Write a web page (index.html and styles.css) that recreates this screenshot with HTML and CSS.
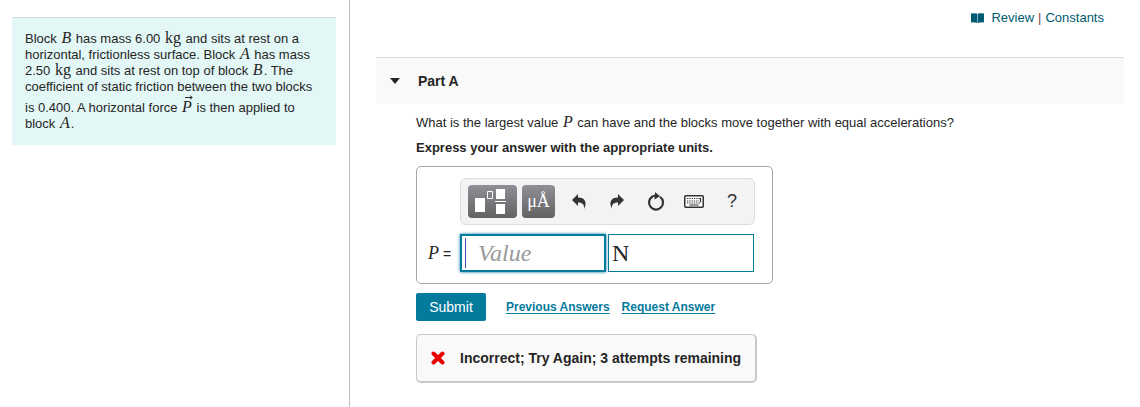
FILE: index.html
```
<!DOCTYPE html>
<html lang="en">
<head>
  <meta charset="UTF-8">
  <title>Part A - Friction Between Blocks</title>
  <meta name="viewport" content="width=device-width, initial-scale=1.0">
  <link rel="stylesheet" href="styles.css">
</head>
<body>
  <div class="page">
    <aside class="sidebar">
      <div class="problem">
        Block <i class="math">B</i> has mass 6.00 <span class="math">kg</span> and sits at rest on a horizontal, frictionless surface. Block <i class="math">A</i> has mass 2.50 <span class="math">kg</span> and sits at rest on top of block <i class="math">B</i>. The coefficient of static friction between the two blocks is 0.400. A horizontal force <span class="vector"><i class="math">P</i><svg class="vector-arrow" viewBox="0 0 8 5"><path d="M0 2.5h7M5 0.7l2.3 1.8L5 4.3" fill="none" stroke="#252525"/></svg></span> is then applied to block <i class="math">A</i>.
      </div>
    </aside>

    <main class="content">
      <nav class="top-links">
        <svg class="book" viewBox="0 0 13 10"><path d="M0 .5Q3 0 6 .5V10Q3 9 0 9.500zM7 .5Q10 0 13 .5V9.500Q10 9 7 10z" fill="#005a70"/><path d="M6.5 1v9" stroke="#7fb0bd"/></svg>
        <a href="#">Review</a>
        <span class="divider">|</span>
        <a href="#">Constants</a>
      </nav>

      <header class="part-header">
        <svg class="toggle" viewBox="0 0 10 6"><path d="M0 0h10L5 6z" fill="#252525"/></svg>
        <h1>Part A</h1>
      </header>

      <form class="part-body">
        <p>What is the largest value <i class="math">P</i> can have and the blocks move together with equal accelerations?</p>
        <p class="instructions">Express your answer with the appropriate units.</p>

        <div class="answer-box">
          <div class="toolbar">
            <button type="button" class="tool tool-wide" aria-label="Templates">
              <svg width="31" height="26" viewBox="0 0 31 26"><path d="M0 9h10v14H0zM21 0h9v10h-9zM21 15h9v10h-9zM20 12h11v1H20z" fill="#fff"/><path d="M12.500 2.500h5v7h-5z" fill="none" stroke="#fff"/></svg>
            </button>
            <button type="button" class="tool">μÅ</button>
            <button type="button" class="tool-icon" aria-label="Undo">
              <svg width="14" height="15" viewBox="0 0 14 15"><path d="M0 6L6 0V3.5C12 3.5 14 7 13.5 11L12 15C12.500 11 11 8.500 6 8.500V12z" fill="#333"/></svg>
            </button>
            <button type="button" class="tool-icon" aria-label="Redo">
              <svg width="14" height="15" viewBox="0 0 14 15"><path d="M14 6L8 0V3.500C2 3.500 0 7 .5 11L2 15C1.500 11 3 8.500 8 8.500V12z" fill="#333"/></svg>
            </button>
            <button type="button" class="tool-icon" aria-label="Reset">
              <svg width="18" height="20" viewBox="0 0 18 20"><path d="M5.500 4.500A7 7 0 1 0 13 4.800" fill="none" stroke="#333" stroke-width="2.200"/><path d="M8 0l5 4.200L7.500 7.500V4.800L4.500 5.500 4 4 8 2.500z" fill="#333"/></svg>
            </button>
            <button type="button" class="tool-icon" aria-label="Keyboard">
              <svg width="20" height="13" viewBox="0 0 20 13"><rect x=".75" y=".75" width="18.500" height="11.500" rx="1" fill="#fff" stroke="#333" stroke-width="1.500"/><path d="M3 3.500h14M3 6h12M3 8h13" stroke="#333" stroke-width="1.200" stroke-dasharray="1.300 1"/><path d="M5.500 10h9M16.500 3v4.500" stroke="#333" stroke-width="1.200"/></svg>
            </button>
            <button type="button" class="tool-icon">?</button>
          </div>
          <div class="answer-row">
            <label for="value"><i>P</i> =</label>
            <div class="value-field">
              <input type="text" id="value" class="value" placeholder="Value">
              <span class="caret"></span>
            </div>
            <input type="text" class="units" value="N" aria-label="Units">
          </div>
        </div>

        <div class="actions">
          <button type="submit" class="submit">Submit</button>
          <a href="#">Previous Answers</a>
          <a href="#">Request Answer</a>
        </div>

        <div class="feedback">
          <svg width="14" height="14" viewBox="0 0 14 14"><path d="M2.500 2.500l9 9M11.500 2.500l-9 9" stroke="#e60000" stroke-width="4" stroke-linecap="round"/></svg>
          <span>Incorrect; Try Again; 3 attempts remaining</span>
        </div>
      </form>
    </main>
  </div>
</body>
</html>
```
FILE: styles.css
```
* {
  box-sizing: border-box;
}
body {
  margin: 0;
  font-family: "Liberation Sans", Arial, sans-serif;
  font-size: 13px;
  line-height: 16px;
  color: #252525;
  background: #fff;
}
button,
input {
  font-family: inherit;
  margin: 0;
}
.page {
  display: flex;
  min-height: 100vh;
}
.sidebar {
  flex: 0 0 350px;
  padding: 17px 13px 0 12px;
  border-right: 1px solid #b8c0c8;
}
.problem {
  padding: 13px 12px 13px 13px;
  background: #e3f7f6;
  border-top: 1px solid #d3dedd;
}
.math {
  margin: 0 1px;
  font-family: "Liberation Serif", "Times New Roman", serif;
  font-size: 16px;
  line-height: 1px;
}
.vector {
  display: inline-block;
  position: relative;
  padding-top: 5px;
}
.vector-arrow {
  position: absolute;
  top: 0;
  left: 4px;
  width: 8px;
  height: 5px;
}
.content {
  flex: 1;
  padding: 10px 16px 20px 26px;
}
.top-links {
  display: flex;
  align-items: center;
  justify-content: flex-end;
  gap: 4px;
  margin-bottom: 31px;
  padding-right: 20px;
  color: #005a70;
}
.top-links a {
  color: #005a70;
  text-decoration: none;
}
.book {
  width: 13px;
  height: 10px;
  margin-right: 3px;
}
.divider {
  color: #7a3b3b;
}
.part-header {
  display: flex;
  align-items: center;
  gap: 18px;
  height: 47px;
  padding: 0 14px;
  background: #f9f9f9;
  border-top: 1px solid #dcdcdc;
}
.toggle {
  width: 10px;
  height: 6px;
}
.part-header h1 {
  margin: 0;
  font-size: 14px;
}
.part-body {
  padding: 11px 0 0 40px;
}
.part-body p {
  margin: 0 0 9px;
}
.part-body .instructions {
  margin-bottom: 10px;
  font-weight: bold;
}
.answer-box {
  width: fit-content;
  padding: 11px 17px 11px 11px;
  border: 1px solid #a6a6a6;
  border-radius: 5px;
}
.toolbar {
  display: flex;
  align-items: center;
  width: 295px;
  height: 47px;
  margin-left: 32px;
  padding: 0 3px 0 7px;
  background: #f3f3f3;
  border: 1px solid #dcdcdc;
  border-radius: 6px;
}
.tool {
  display: flex;
  align-items: center;
  justify-content: center;
  width: 33px;
  height: 33px;
  margin-right: 5px;
  padding: 0;
  font-family: "Liberation Serif", "Times New Roman", serif;
  font-size: 18px;
  color: #fff;
  background: linear-gradient(#918f97, #626262);
  border: 0;
  border-radius: 4px;
}
.tool-wide {
  width: 49px;
  padding-right: 4px;
}
.tool-icon {
  display: flex;
  flex: 1;
  align-items: center;
  justify-content: center;
  padding: 0;
  font-size: 18px;
  color: #333;
  background: none;
  border: 0;
}
.answer-row {
  display: flex;
  align-items: center;
  margin-top: 9px;
}
.answer-row label {
  width: 32px;
  font-size: 14px;
}
.answer-row label i {
  font-family: "Liberation Serif", "Times New Roman", serif;
  font-size: 18px;
}
.value-field {
  position: relative;
  margin-right: 2px;
}
.value,
.units {
  display: block;
  width: 146px;
  height: 38px;
  padding: 0 3px;
  font-family: "Liberation Serif", "Times New Roman", serif;
  font-size: 24px;
  color: #252525;
  background: #fff;
  border: 1px solid #047a9c;
  border-radius: 0;
  outline: none;
}
.value {
  padding-left: 16px;
  border-width: 2px;
  box-shadow: 0 0 3px #047a9c;
}
.value::placeholder {
  font-style: italic;
  color: #999;
}
.caret {
  position: absolute;
  top: 4px;
  left: 5px;
  width: 1px;
  height: 30px;
  background: #3c50b4;
}
.actions {
  display: flex;
  align-items: center;
  gap: 12px;
  margin: 9px 0 13px;
}
.actions a {
  font-size: 12px;
  font-weight: bold;
  color: #047a9c;
  text-underline-offset: 2px;
}
.submit {
  width: 70px;
  height: 28px;
  margin-right: 8px;
  padding: 0;
  font-size: 14px;
  color: #fff;
  background: #047a9c;
  border: 0;
  border-radius: 2px;
}
.feedback {
  display: flex;
  align-items: center;
  gap: 15px;
  width: fit-content;
  height: 49px;
  padding: 0 14px;
  font-size: 14px;
  font-weight: bold;
  background: #f9f9f9;
  border: 1px solid #c8c8c8;
  border-right-width: 2px;
  border-bottom-width: 2px;
  border-radius: 5px;
}
```
